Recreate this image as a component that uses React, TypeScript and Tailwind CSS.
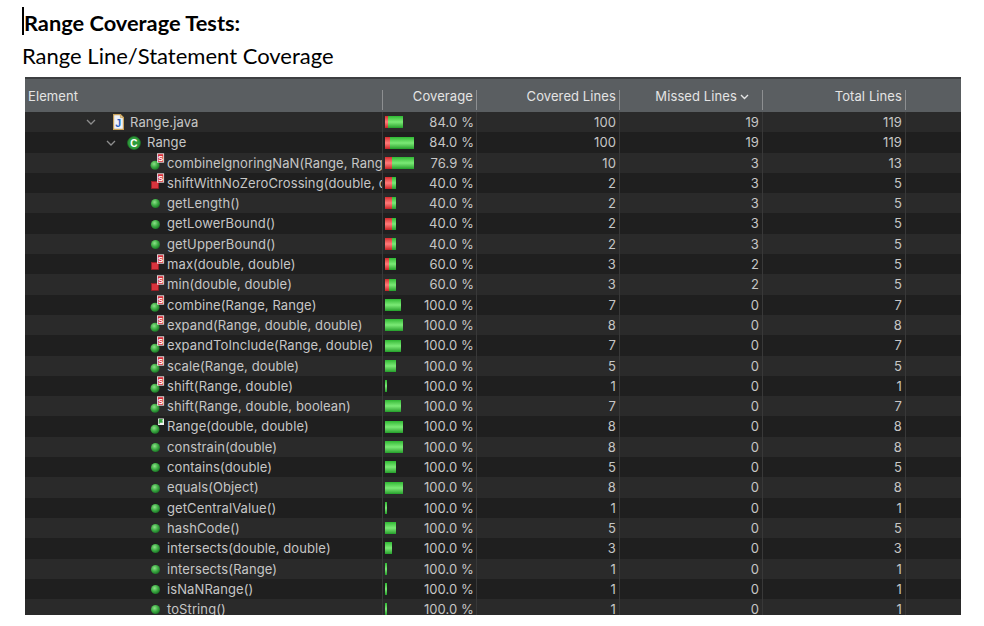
import React from "react";

type Kind = "file" | "class" | "pub" | "stat" | "priv" | "ctor";

interface Row {
  name: string;
  kind: Kind;
  pct: string;
  covered: number;
  missed: number;
  total: number;
  bar: number; // bar width in px
}

const rows: Row[] = [
  { name: "Range.java", kind: "file", pct: "84.0 %", covered: 100, missed: 19, total: 119, bar: 18 },
  { name: "Range", kind: "class", pct: "84.0 %", covered: 100, missed: 19, total: 119, bar: 29 },
  { name: "combineIgnoringNaN(Range, Range)", kind: "stat", pct: "76.9 %", covered: 10, missed: 3, total: 13, bar: 29 },
  { name: "shiftWithNoZeroCrossing(double, double)", kind: "priv", pct: "40.0 %", covered: 2, missed: 3, total: 5, bar: 11 },
  { name: "getLength()", kind: "pub", pct: "40.0 %", covered: 2, missed: 3, total: 5, bar: 11 },
  { name: "getLowerBound()", kind: "pub", pct: "40.0 %", covered: 2, missed: 3, total: 5, bar: 11 },
  { name: "getUpperBound()", kind: "pub", pct: "40.0 %", covered: 2, missed: 3, total: 5, bar: 11 },
  { name: "max(double, double)", kind: "priv", pct: "60.0 %", covered: 3, missed: 2, total: 5, bar: 11 },
  { name: "min(double, double)", kind: "priv", pct: "60.0 %", covered: 3, missed: 2, total: 5, bar: 11 },
  { name: "combine(Range, Range)", kind: "stat", pct: "100.0 %", covered: 7, missed: 0, total: 7, bar: 16 },
  { name: "expand(Range, double, double)", kind: "stat", pct: "100.0 %", covered: 8, missed: 0, total: 8, bar: 18 },
  { name: "expandToInclude(Range, double)", kind: "stat", pct: "100.0 %", covered: 7, missed: 0, total: 7, bar: 16 },
  { name: "scale(Range, double)", kind: "stat", pct: "100.0 %", covered: 5, missed: 0, total: 5, bar: 11 },
  { name: "shift(Range, double)", kind: "stat", pct: "100.0 %", covered: 1, missed: 0, total: 1, bar: 2 },
  { name: "shift(Range, double, boolean)", kind: "stat", pct: "100.0 %", covered: 7, missed: 0, total: 7, bar: 16 },
  { name: "Range(double, double)", kind: "ctor", pct: "100.0 %", covered: 8, missed: 0, total: 8, bar: 18 },
  { name: "constrain(double)", kind: "pub", pct: "100.0 %", covered: 8, missed: 0, total: 8, bar: 18 },
  { name: "contains(double)", kind: "pub", pct: "100.0 %", covered: 5, missed: 0, total: 5, bar: 11 },
  { name: "equals(Object)", kind: "pub", pct: "100.0 %", covered: 8, missed: 0, total: 8, bar: 18 },
  { name: "getCentralValue()", kind: "pub", pct: "100.0 %", covered: 1, missed: 0, total: 1, bar: 2 },
  { name: "hashCode()", kind: "pub", pct: "100.0 %", covered: 5, missed: 0, total: 5, bar: 11 },
  { name: "intersects(double, double)", kind: "pub", pct: "100.0 %", covered: 3, missed: 0, total: 3, bar: 7 },
  { name: "intersects(Range)", kind: "pub", pct: "100.0 %", covered: 1, missed: 0, total: 1, bar: 2 },
  { name: "isNaNRange()", kind: "pub", pct: "100.0 %", covered: 1, missed: 0, total: 1, bar: 2 },
  { name: "toString()", kind: "pub", pct: "100.0 %", covered: 1, missed: 0, total: 1, bar: 2 },
];

const Chevron = () => (
  <svg width="10" height="6" viewBox="0 0 10 6" className="shrink-0">
    <polyline points="1,1 5,5 9,1" fill="none" stroke="#8e8e8e" strokeWidth="1.3" />
  </svg>
);

const Dot = ({ cx, cy }: { cx: number; cy: number }) => (
  <>
    <defs>
      <radialGradient id="gdot" cx="40%" cy="35%" r="65%">
        <stop offset="0%" stopColor="#8fe08a" />
        <stop offset="55%" stopColor="#3fae45" />
        <stop offset="100%" stopColor="#1d7a28" />
      </radialGradient>
    </defs>
    <circle cx={cx} cy={cy} r="4.5" fill="url(#gdot)" />
  </>
);

const SBadge = () => (
  <>
    <rect x="7.5" y="0.8" width="6.2" height="8.4" fill="#d62f3b" stroke="#f4f4f4" strokeWidth="0.8" />
    <text x="10.6" y="7.8" fontSize="7.8" fontWeight="700" fill="#ffffff" textAnchor="middle" fontFamily="Liberation Sans, sans-serif">
      S
    </text>
  </>
);

const MemberIcon = ({ kind }: { kind: Kind }) => (
  <svg width="15" height="20" viewBox="0 0 15 20" className="shrink-0">
    {kind === "pub" && <Dot cx={5.5} cy={10.5} />}
    {kind === "stat" && (
      <>
        <Dot cx={5} cy={12.3} />
        <SBadge />
      </>
    )}
    {kind === "priv" && (
      <>
        <rect x="1.5" y="8.5" width="7" height="7" fill="#d8343e" stroke="#9c1c24" strokeWidth="0.8" />
        <SBadge />
      </>
    )}
    {kind === "ctor" && (
      <>
        <Dot cx={5} cy={12.3} />
        <rect x="8" y="1.5" width="6" height="6.5" fill="#f2f2f2" />
        <path d="M9.2 2.6 V7 M9.2 2.6 H12.6 L11.6 3.9 L12.6 5.2 H9.2" fill="#34a33c" stroke="#34a33c" strokeWidth="0.9" />
      </>
    )}
  </svg>
);

const FileIcon = () => (
  <svg width="11" height="16" viewBox="0 0 11 16" className="shrink-0">
    <path d="M0.6 0.6 H7.4 L10.4 3.6 V15.4 H0.6 Z" fill="#eef2fa" stroke="#c9a25a" strokeWidth="1.2" />
    <path d="M7.4 0.6 V3.6 H10.4" fill="none" stroke="#c9a25a" strokeWidth="0.9" />
    <text x="5.3" y="13" fontSize="10.5" fontWeight="700" fill="#2a62c4" textAnchor="middle" fontFamily="Liberation Sans, sans-serif">
      J
    </text>
  </svg>
);

const ClassIcon = () => (
  <svg width="14" height="14" viewBox="0 0 14 14" className="shrink-0">
    <circle cx="7" cy="7" r="6.4" fill="#2f9c3b" stroke="#1e7428" strokeWidth="0.8" />
    <text x="7" y="10.6" fontSize="10" fontWeight="700" fill="#ffffff" textAnchor="middle" fontFamily="Liberation Sans, sans-serif">
      C
    </text>
  </svg>
);

const Bar = ({ width, missed, total }: { width: number; missed: number; total: number }) => {
  const red = total > 0 ? Math.round((width * missed) / total) : 0;
  return (
    <div className="flex h-[12px] shrink-0" style={{ width }}>
      {red > 0 && (
        <div className="h-full bg-linear-to-b from-[#d52a2e] via-[#ff7a7a] to-[#c81f25]" style={{ width: red }} />
      )}
      <div className="h-full flex-1 bg-linear-to-b from-[#2cb932] via-[#7bea76] to-[#21a02a]" />
    </div>
  );
};

const cols = "grid grid-cols-[358px_94px_143px_143px_143px_55px]";
const cell = "border-r border-[#383838]";

function ElementCell({ row }: { row: Row }) {
  if (row.kind === "file") {
    return (
      <div className={`${cell} flex items-center overflow-hidden whitespace-nowrap pl-[61px]`}>
        <Chevron />
        <div className="ml-[17px]">
          <FileIcon />
        </div>
        <span className="ml-[6px] pt-[1px]">{row.name}</span>
      </div>
    );
  }
  if (row.kind === "class") {
    return (
      <div className={`${cell} flex items-center overflow-hidden whitespace-nowrap pl-[81px]`}>
        <Chevron />
        <div className="ml-[11px]">
          <ClassIcon />
        </div>
        <span className="ml-[6px] pt-[1px]">{row.name}</span>
      </div>
    );
  }
  return (
    <div className={`${cell} flex items-center overflow-hidden whitespace-nowrap pl-[125px]`}>
      <MemberIcon kind={row.kind} />
      <span className="ml-[2px] pt-[1px]">{row.name}</span>
    </div>
  );
}

const HeadSep = () => <span className="ml-[3px] mb-[2px] h-[20px] w-px shrink-0 self-end bg-[#8d8f91]" />;

export default function App() {
  return (
    <div className="relative h-[626px] w-[984px] overflow-hidden bg-white">
      <div className="pl-[22px] font-['Lato',sans-serif] text-black">
        <div className="flex h-[35px] items-end">
          <span className="h-[28px] w-[2px] shrink-0 bg-black" />
          <span className="text-[21.8px] font-bold leading-[24px]">Range Coverage Tests:</span>
        </div>
        <div className="h-[42px] text-[22px] leading-[42px]">Range Line/Statement Coverage</div>
      </div>

      <div className="ml-[25px] h-[538px] w-[936px] overflow-hidden border-t-2 border-[#3d3f41] bg-[#1f1f1f] font-['Inter',sans-serif] text-[13px] tracking-[0.1px]">
        <div className={`${cols} h-[33px] bg-[#5a5e61] text-[#e4e4e4]`}>
          <div className="flex items-center justify-between pl-[3px]">
            <span className="pt-[2px]">Element</span>
            <HeadSep />
          </div>
          <div className="flex items-center justify-end">
            <span className="pt-[2px]">Coverage</span>
            <HeadSep />
          </div>
          <div className="flex items-center justify-end">
            <span className="pt-[2px]">Covered Lines</span>
            <HeadSep />
          </div>
          <div className="flex items-center justify-end">
            <span className="pt-[2px]">Missed Lines</span>
            <svg width="9" height="6" viewBox="0 0 9 6" className="ml-[3px] mr-[10px] mt-[2px]">
              <polyline points="1,1 4.5,4.5 8,1" fill="none" stroke="#e4e4e4" strokeWidth="1.4" />
            </svg>
            <HeadSep />
          </div>
          <div className="flex items-center justify-end">
            <span className="pt-[2px]">Total Lines</span>
            <HeadSep />
          </div>
          <div />
        </div>

        {rows.map((row, i) => (
          <div
            key={row.name}
            className={`${cols} h-[20.3px] text-[#c6c6c6] ${i % 2 === 0 ? "bg-[#2a2a2a]" : "bg-[#1f1f1f]"}`}
          >
            <ElementCell row={row} />
            <div className={`${cell} flex items-center pl-[2px] pr-[2px]`}>
              <Bar width={row.bar} missed={row.missed} total={row.total} />
              <span className="ml-auto pt-[1px]">{row.pct}</span>
            </div>
            <div className={`${cell} flex items-center justify-end pr-[3px] pt-[1px]`}>{row.covered}</div>
            <div className={`${cell} flex items-center justify-end pr-[3px] pt-[1px]`}>{row.missed}</div>
            <div className={`${cell} flex items-center justify-end pr-[3px] pt-[1px]`}>{row.total}</div>
            <div />
          </div>
        ))}
      </div>
    </div>
  );
}
